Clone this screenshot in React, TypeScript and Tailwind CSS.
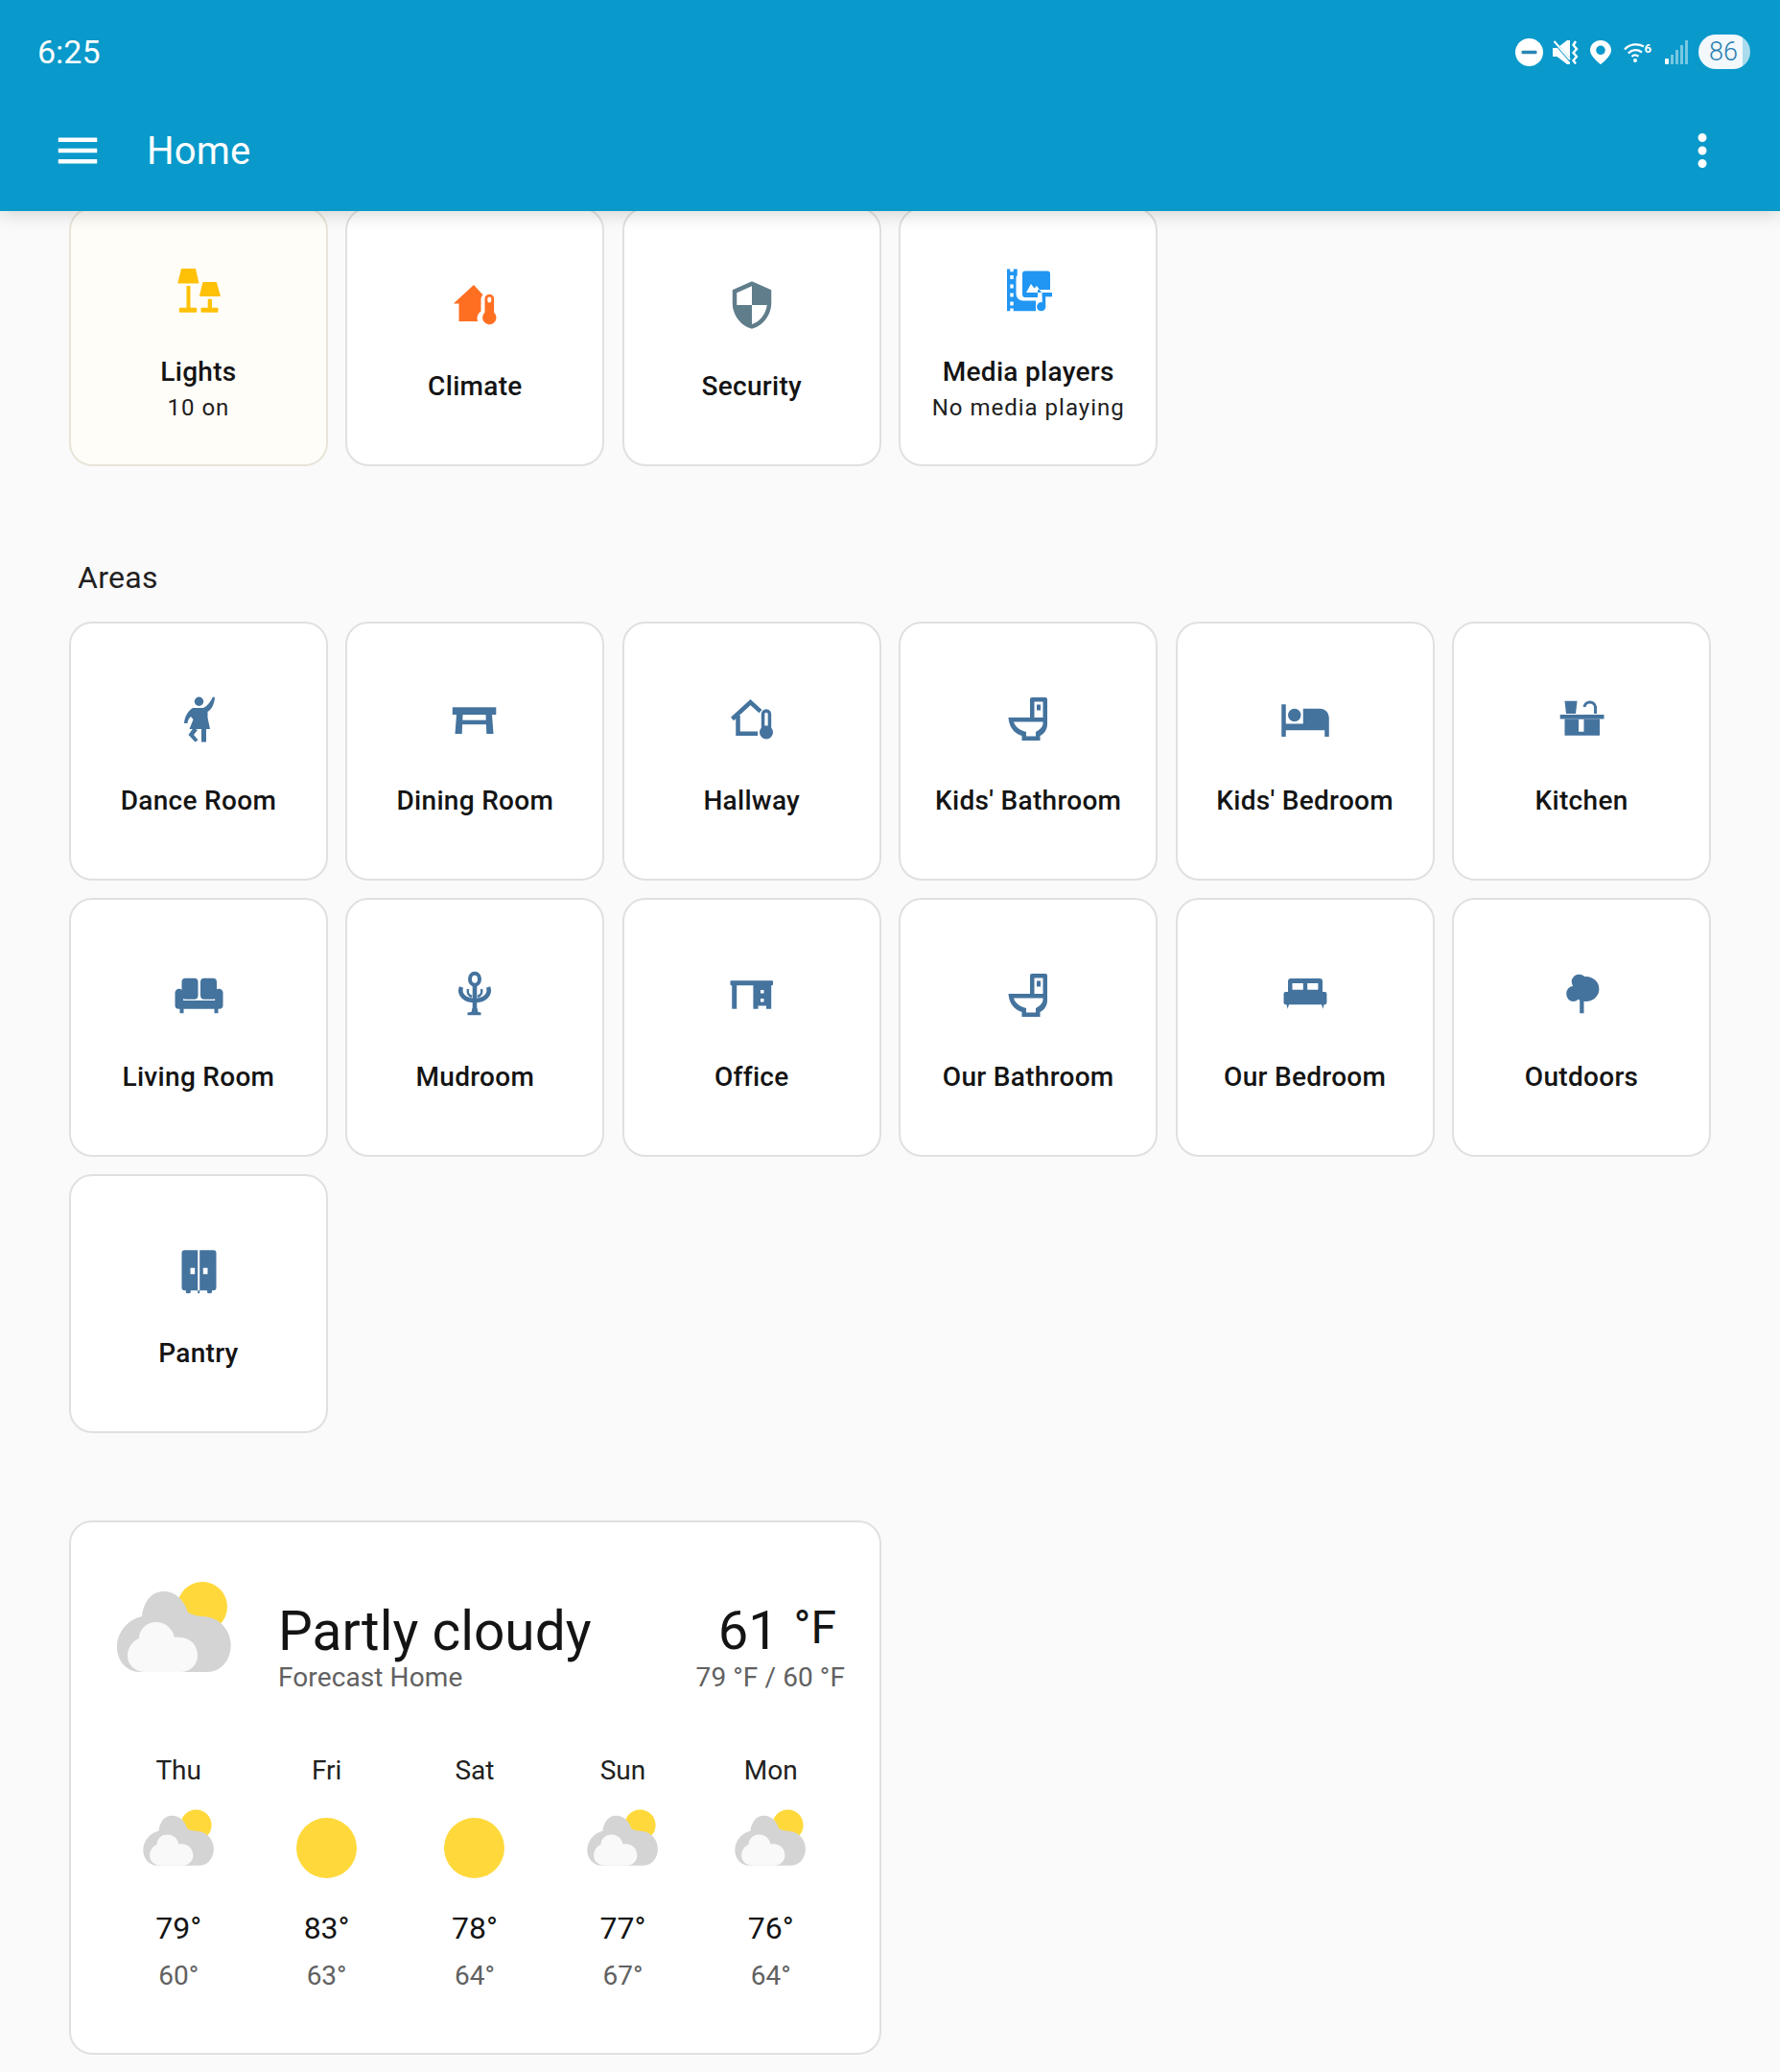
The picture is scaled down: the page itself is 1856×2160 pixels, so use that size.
import type { ReactNode } from "react";

const AREA_BLUE = "#44739e";

function Icon({ color = AREA_BLUE, children }: { color?: string; children: ReactNode }) {
  return (
    <svg viewBox="0 0 54 54" className="h-[54px] w-[54px] shrink-0" fill={color} style={{ color }}>
      {children}
    </svg>
  );
}

const LampsIcon = () => (
  <Icon color="#ffc107">
    <path d="M9 5h15l3.500 15.500H5.300z" />
    <rect x="14.500" y="23" width="4" height="23" />
    <rect x="6.800" y="45.700" width="18.400" height="5" rx="1" />
    <path d="M31.500 19h14.300L50 34H27.800z" />
    <rect x="36.700" y="36.700" width="4.200" height="10" />
    <rect x="29.500" y="45.700" width="18" height="5" rx="1" />
  </Icon>
);

const ClimateIcon = () => (
  <Icon color="#ff6f22">
    <g transform="translate(3 3)">
      <path d="M23 3 1.800 22.600H7.500V41H27.300C26.800 40 26.500 39 26.500 38C26.500 34.700 28 32 30.500 30.400V17.600C30.500 16 31.300 14.400 32.600 13.400Z" />
      <path
        fillRule="evenodd"
        d="M34.500 17.500a4.800 4.800 0 0 1 9.600 0v14.200a7.200 7.200 0 1 1-9.600 0zM39.300 15.500a2 2 0 0 0-2 2v2a2 2 0 0 0 4 0v-2a2 2 0 0 0-2-2z"
      />
    </g>
  </Icon>
);

const SecurityIcon = () => (
  <Icon color="#607d8b">
    <g transform="scale(2.25)">
      <path d="M12,12H19C18.470,16.110 15.720,19.780 12,20.920V12H5V6.300L12,3.190M12,1L3,5V11C3,16.550 6.840,21.730 12,23C17.160,21.730 21,16.550 21,11V5L12,1Z" />
    </g>
  </Icon>
);

const MediaIcon = () => (
  <Icon color="#2196f3">
    <path
      fillRule="evenodd"
      d="M5 5.500h3.300v2.800h3.400V5.500h4v6.500c-1 .8-1.200 2-1.200 3v16c0 4.500 3 7.500 7.500 7.500H35v10.700H11.700v-2.800H8.300v2.800H5zM8.300 12v4h3.400v-4zM8.300 21.500v4h3.400v-4zM8.300 30.500v4h3.400v-4zM8.300 39.500v4h3.400v-4z"
    />
    <path
      fillRule="evenodd"
      d="M24 7.500H47a3 3 0 0 1 3 3V27H37v8H24a3 3 0 0 1-3-3V10.500a3 3 0 0 1 3-3zM25 30l5-9 3.500 4.500 2.500-2.500 5 7z"
    />
    <rect x="41.700" y="30" width="3.500" height="15" />
    <rect x="41.700" y="30" width="10.300" height="4.300" />
    <circle cx="40.700" cy="44.700" r="4.600" />
  </Icon>
);

const DanceIcon = () => (
  <Icon>
    <circle cx="27.500" cy="8.300" r="4.700" />
    <path d="M42 3.500 44 4C43.500 10 41.500 16 36.500 19V25L39 37H17.500L21.500 27L19 24C17 26 15.500 28 15.500 31H12C12.500 25 15 19 21 15H32C36 13 39.500 9 42 3.500Z" />
    <rect x="30" y="36" width="5" height="14.500" />
    <path d="M21.500 36 26 38 22 43 26.500 48.500 23.500 50.500 16.500 43Z" />
  </Icon>
);

const TableIcon = () => (
  <Icon>
    <rect x="3.800" y="14.300" width="45.500" height="7.800" />
    <path d="M8 22h6.500l-.8 20H6.500zM38.500 22H45l1.500 20h-7.200z" />
    <rect x="12" y="27.700" width="29" height="4.500" />
  </Icon>
);

const HomeThermoIcon = () => (
  <Icon>
    <path d="M33 41.700H12.500V23M6.500 26.500 25.500 9 36 18.700" fill="none" stroke={AREA_BLUE} strokeWidth="4.500" />
    <path
      fillRule="evenodd"
      d="M36.800 21.500a5.200 5.200 0 0 1 10.400 0v14.300a7 7 0 1 1-10.400 0zM40.300 21.500v12h3.400v-12a1.700 1.700 0 0 0-3.400 0z"
    />
  </Icon>
);

const ToiletIcon = () => (
  <Icon>
    <path
      fillRule="evenodd"
      d="M31 4H45a2 2 0 0 1 2 2V32C47 38 43 42.500 39.500 44V49H20.500V44C13 42 7 35 6.500 25H29V6a2 2 0 0 1 2-2zM33.500 8.500V25H42.500V8.500zM36 11.500H40V17.500H36zM12 29.500C13.500 35 19 38.500 25 40V44.500H35V40C38 38.500 42.500 35 42.500 31V29.500z"
    />
  </Icon>
);

const BedPersonIcon = () => (
  <Icon>
    <g transform="scale(2.25)">
      <path d="M19,7H11V14H3V5H1V20H3V17H21V20H23V11A4,4 0 0,0 19,7M7,13A3,3 0 0,0 10,10A3,3 0 0,0 7,7A3,3 0 0,0 4,10A3,3 0 0,0 7,13Z" />
    </g>
  </Icon>
);

const KitchenIcon = () => (
  <Icon>
    <path d="M9.500 7.700h13L21 21H11z" />
    <path d="M30 14a5.800 5.800 0 0 1 11.500 0v7" fill="none" stroke={AREA_BLUE} strokeWidth="3" />
    <rect x="4.700" y="22" width="45.800" height="4.500" />
    <path fillRule="evenodd" d="M9.500 26.500H46V43.700H9.500zM24 27V39.700H29.500V27z" />
  </Icon>
);

const SofaIcon = () => (
  <Icon>
    <rect x="9.500" y="8.700" width="17" height="22" rx="4" />
    <rect x="29" y="8.700" width="17" height="22" rx="4" />
    <path d="M2.500 24a4.300 4.300 0 0 1 8.600 0v8h33V24a4.200 4.200 0 0 1 8.400 0V37a3.700 3.700 0 0 1-3.700 3.700H47.500v4.600H43.500V40.700H11.500v4.600H7.500V40.700H6.200A3.700 3.700 0 0 1 2.500 37z" />
  </Icon>
);

const CoatRackIcon = () => (
  <Icon>
    <ellipse cx="27" cy="9.800" rx="5" ry="6" fill="none" stroke={AREA_BLUE} strokeWidth="4" />
    <rect x="24.700" y="15" width="4.600" height="30" />
    <path d="M13 18C10 26 17 32 27 32C37 32 44 26 41 18" fill="none" stroke={AREA_BLUE} strokeWidth="4.500" />
    <path d="M20 20c-1 4 1 7 4 8M34 20c1 4-1 7-4 8" fill="none" stroke={AREA_BLUE} strokeWidth="2.500" />
    <path d="M24.500 40h5l1 4 3 .5V47.300H19.500V44.500l4-.5z" />
  </Icon>
);

const DeskIcon = () => (
  <Icon>
    <rect x="4.500" y="11.300" width="44.500" height="5" rx="1" />
    <rect x="6.200" y="15" width="5" height="25.700" />
    <path
      fillRule="evenodd"
      d="M28.400 15H47.200V40.700H42V37.500H33.500V40.700H28.400zM36 21V24.500H39.500V21zM36 30V33.500H39.500V30z"
    />
  </Icon>
);

const BedIcon = () => (
  <Icon>
    <path
      fillRule="evenodd"
      d="M12 9H42a3 3 0 0 1 3 3V23h2.400A2 2 0 0 1 49.400 25V34.300a2 2 0 0 1-2 2H46.500L45.500 40.700 44 36.300H10L8.500 40.700 7.500 36.300H6.500a2 2 0 0 1-2-2V25a2 2 0 0 1 2-2H9V12a3 3 0 0 1 3-3zM13.500 14V20.700H24.800V14zM29.200 14V20.700H40.400V14z"
    />
  </Icon>
);

const TreeIcon = () => (
  <Icon>
    <circle cx="24.500" cy="12.500" r="7.800" />
    <ellipse cx="31.500" cy="20" rx="13.900" ry="13" />
    <ellipse cx="18.500" cy="25" rx="7.300" ry="8" />
    <rect x="25.200" y="30" width="4.300" height="15.300" />
  </Icon>
);

const WardrobeIcon = () => (
  <Icon>
    <path
      fillRule="evenodd"
      d="M12.500 4.300H42.500a3 3 0 0 1 3 3V43.300a3 3 0 0 1-3 3H41V47.800a1.500 1.500 0 0 1-1.500 1.500H37.500a1.500 1.500 0 0 1-1.500-1.500V46.300H18.800V47.800a1.500 1.500 0 0 1-1.500 1.500H15.300a1.500 1.500 0 0 1-1.500-1.500V46.300H12.500a3 3 0 0 1-3-3V7.300a3 3 0 0 1 3-3zM26.200 4.300V49.300H28.200V4.300zM18.500 22.700V29.300H23.200V22.700zM31.800 22.700V29.300H36.500V22.700z"
    />
  </Icon>
);

function CloudSun({ className }: { className: string }) {
  return (
    <svg viewBox="0 0 124 100" className={className}>
      <circle cx="91" cy="30" r="26" fill="#ffd93b" />
      <path
        fill="#d4d4d4"
        d="M26 98C12 98 2 86 2 72C2 56 14 43 28 40C30 24 38 14 51 14C62 14 72 22 76 36C82 39 88 40 91 40C108 40 120.700 54 120.700 70C120.700 86 110 98 96 98z"
      />
      <path
        fill="#f9f9f9"
        d="M32 98C21 98 13 91 13 81C13 72 19 65 25 63C25 54 32 46 43 46C53 46 60 53 62 62C78 60 86 70 86 81C86 91 78 98 68 98z"
      />
    </svg>
  );
}

function Card({ icon, name, detail, tint }: { icon: ReactNode; name: string; detail?: string; tint?: boolean }) {
  return (
    <div
      className={`flex h-[270px] flex-col items-center rounded-[24px] border-2 ${detail ? "pt-[57px]" : "pt-[73px]"} ${
        tint ? "border-[#e8e4da] bg-[#fffdf7]" : "border-[#e0e0e0] bg-white"
      }`}
    >
      {icon}
      <div className={`${detail ? "mt-[39px]" : "mt-[38px]"} text-[28px] leading-[40px] font-medium tracking-[0.3px] text-[#141414]`}>{name}</div>
      {detail && <div className="text-[24px] leading-[35px] tracking-[1px] text-[#212121]">{detail}</div>}
    </div>
  );
}

const forecast = [
  { day: "Thu", sunny: false, high: "79°", low: "60°" },
  { day: "Fri", sunny: true, high: "83°", low: "63°" },
  { day: "Sat", sunny: true, high: "78°", low: "64°" },
  { day: "Sun", sunny: false, high: "77°", low: "67°" },
  { day: "Mon", sunny: false, high: "76°", low: "64°" },
];

const summary = [
  { icon: <LampsIcon />, name: "Lights", detail: "10 on", tint: true },
  { icon: <ClimateIcon />, name: "Climate" },
  { icon: <SecurityIcon />, name: "Security" },
  { icon: <MediaIcon />, name: "Media players", detail: "No media playing" },
];

const areas = [
  { icon: <DanceIcon />, name: "Dance Room" },
  { icon: <TableIcon />, name: "Dining Room" },
  { icon: <HomeThermoIcon />, name: "Hallway" },
  { icon: <ToiletIcon />, name: "Kids' Bathroom" },
  { icon: <BedPersonIcon />, name: "Kids' Bedroom" },
  { icon: <KitchenIcon />, name: "Kitchen" },
  { icon: <SofaIcon />, name: "Living Room" },
  { icon: <CoatRackIcon />, name: "Mudroom" },
  { icon: <DeskIcon />, name: "Office" },
  { icon: <ToiletIcon />, name: "Our Bathroom" },
  { icon: <BedIcon />, name: "Our Bedroom" },
  { icon: <TreeIcon />, name: "Outdoors" },
  { icon: <WardrobeIcon />, name: "Pantry" },
];

function StatusIcons() {
  return (
    <div className="flex items-center">
      <svg viewBox="0 0 29 29" className="h-[29px] w-[29px]">
        <circle cx="14.500" cy="14.500" r="14.500" fill="white" />
        <rect x="6.500" y="12.800" width="16" height="3.400" rx="1.200" fill="#2a86b5" />
      </svg>
      <svg viewBox="0 0 27 25" className="ml-[10px] h-[25px] w-[27px]">
        <path d="M0 8h4.500L15 0h3v25h-3L4.500 17H0z" fill="white" />
        <path d="M0 0 20 23" stroke="#0999ca" strokeWidth="3" />
        <path d="M1.500 1 18 20" stroke="white" strokeWidth="2" />
        <path d="M24 1 21.500 5 25 9 21.500 13 25 17 21.500 21 24 24.500" fill="none" stroke="white" strokeWidth="2.400" />
      </svg>
      <svg viewBox="0 0 22 25" className="ml-[12px] h-[25px] w-[22px]">
        <path
          fill="white"
          fillRule="evenodd"
          d="M11 0C5 0 0 4.500 0 10.500C0 17 11 25 11 25S22 17 22 10.500C22 4.500 17 0 11 0zM11 5.500a4.800 4.800 0 1 1 0 9.600a4.800 4.800 0 0 1 0-9.600z"
        />
      </svg>
      <svg viewBox="0 0 30 21" className="ml-[13px] h-[21px] w-[30px]">
        <path d="M1 7.500C6.500 1.500 15 1 21 4.500M4.800 11.500C9 7.500 14.500 7.200 19 10.500M8.500 15C10.500 13 13 13 15.500 14.800" fill="none" stroke="white" strokeWidth="2.300" />
        <circle cx="12" cy="19" r="2" fill="white" />
        <text x="21.500" y="11" fontSize="13" fontWeight="700" fill="white" fontFamily="Roboto, sans-serif">
          6
        </text>
      </svg>
      <div className="ml-[13px] flex h-[25px] w-[24px] items-end justify-between">
        <div className="h-[6px] w-[4px] rounded-[1px] bg-white" />
        <div className="h-[10px] w-[3px] bg-white/45" />
        <div className="h-[15px] w-[3px] bg-white/45" />
        <div className="h-[20px] w-[3px] bg-white/45" />
        <div className="h-[25px] w-[3px] bg-white/45" />
      </div>
      <div className="relative ml-[11px] flex h-[36px] w-[54px] overflow-hidden rounded-[18px]">
        <div className="w-[46px] bg-[#f2f8fb]" />
        <div className="flex-1 bg-white/65" />
        <div className="absolute inset-0 flex items-center justify-center pr-[2px] text-[27px] font-light text-[#2a7fb0]">86</div>
      </div>
    </div>
  );
}

export default function App() {
  return (
    <div className="min-h-[2160px] overflow-hidden bg-[#fafafa] font-[Roboto,sans-serif]">
      <header className="relative z-10 h-[220px] bg-[#0999ca] text-white shadow-[0_3px_18px_rgba(0,0,0,0.16)]">
        <div className="flex h-[108px] items-center justify-between pr-[31px] pl-[39px]">
          <div className="text-[34px] leading-none">6:25</div>
          <StatusIcons />
        </div>
        <div className="flex h-[99px] items-center pr-[54px] pl-[54px]">
          <svg viewBox="0 0 24 24" className="-mt-[2px] h-[54px] w-[54px]" fill="white">
            <path d="M3,6H21V8H3V6M3,11H21V13H3V11M3,16H21V18H3V16Z" />
          </svg>
          <div className="ml-[45px] text-[40px] leading-none tracking-[0.2px]">Home</div>
          <svg viewBox="0 0 24 24" className="-mt-[2px] ml-auto h-[54px] w-[54px]" fill="white">
            <path d="M12,16A2,2 0 0,1 14,18A2,2 0 0,1 12,20A2,2 0 0,1 10,18A2,2 0 0,1 12,16M12,10A2,2 0 0,1 14,12A2,2 0 0,1 12,14A2,2 0 0,1 10,12A2,2 0 0,1 12,10M12,4A2,2 0 0,1 14,6A2,2 0 0,1 12,8A2,2 0 0,1 10,6A2,2 0 0,1 12,4Z" />
          </svg>
        </div>
      </header>

      <main className="-mt-[4px] pr-[72px] pl-[72px]">
        <div className="grid grid-cols-6 gap-x-[18.6px]">
          {summary.map((card) => (
            <Card key={card.name} {...card} />
          ))}
        </div>

        <h2 className="mt-[96px] mb-[26px] pl-[9px] text-[32px] leading-[40px] font-normal tracking-[0.3px] text-[#212121]">Areas</h2>

        <div className="grid grid-cols-6 gap-x-[18.6px] gap-y-[18px]">
          {areas.map((card) => (
            <Card key={card.name} {...card} />
          ))}
        </div>

        <section className="mt-[91px] w-[847px] rounded-[24px] border-2 border-[#e0e0e0] bg-white pt-[53px] pr-[36px] pb-[62px] pl-[35px]">
          <div className="flex items-start">
            <CloudSun className="mt-[5px] ml-[11px] h-[100px] w-[124px]" />
            <div className="mt-[28px] ml-[46px]">
              <div className="text-[56.800px] leading-[65px] text-[#141414]">Partly cloudy</div>
              <div className="text-[28px] leading-[32px] tracking-[0.1px] text-[#616161]">Forecast Home</div>
            </div>
            <div className="mt-[28px] ml-auto text-right">
              <div className="mr-[9px] text-[56px] leading-[65px] text-[#141414]">
                61 <span className="pl-[2px] align-top text-[48px] leading-[58px]">°F</span>
              </div>
              <div className="text-[28px] leading-[32px] tracking-[0.1px] text-[#616161]">79 °F / 60 °F</div>
            </div>
          </div>

          <div className="mt-[63px] grid grid-cols-5">
            {forecast.map((item) => (
              <div key={item.day} className="flex flex-col items-center">
                <div className="text-[28px] leading-[36px] text-[#212121]">{item.day}</div>
                <div className="mt-[23px] flex h-[80px] items-start justify-center">
                  {item.sunny ? (
                    <div className="mt-[8px] h-[63px] w-[63px] rounded-full bg-[#ffd93b]" />
                  ) : (
                    <CloudSun className="-mt-[3px] h-[62px] w-[77px]" />
                  )}
                </div>
                <div className="mt-[23px] text-[32px] leading-[40px] text-[#141414]">{item.high}</div>
                <div className="mt-[12px] text-[28px] leading-[36px] text-[#616161]">{item.low}</div>
              </div>
            ))}
          </div>
        </section>
      </main>
    </div>
  );
}
